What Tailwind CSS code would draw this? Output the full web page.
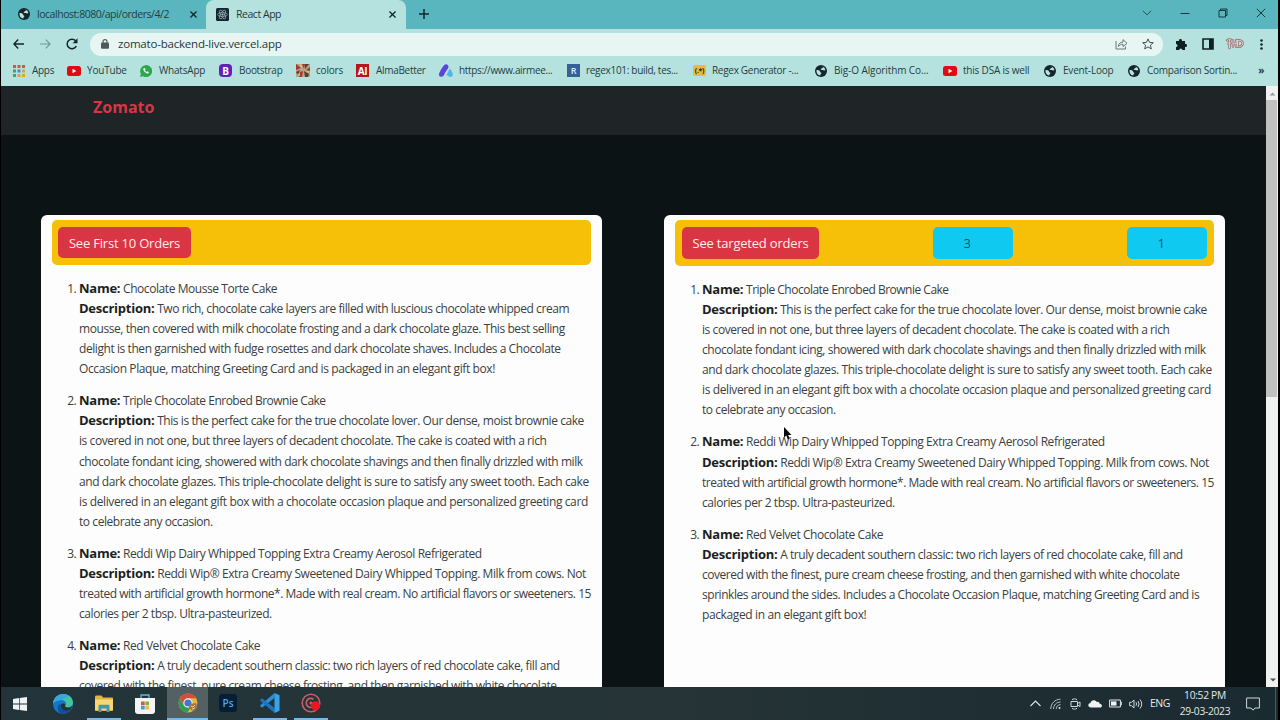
<!DOCTYPE html>
<html lang="en">
<head>
  <meta charset="UTF-8">
  <title>React App</title>
  <script src="https://cdn.jsdelivr.net/npm/@tailwindcss/browser@4"></script>
</head>
<body class="bg-black w-[1280px] h-[720px] overflow-hidden font-['Open_Sans','Noto_Sans',sans-serif]">
  <svg class="hidden">
    <symbol id="globe" viewBox="0 0 12 12">
      <circle cx="6" cy="6" r="6" fill="#14262b"/>
      <path d="M1.4 5.2C2.6 4.8 3.8 5 4.6 5.7c.8.6.2 1.5 1.2 1.7.9.2.6 1.2 0 1.6-.5.4-.3 1-.6 1.6C2.9 10.2 1.3 8.2 1.4 5.2zM5.5 1.4c.8-.2 2.3 0 3 .6-.3.9-1.3.7-1.6 1.3-.3.7-1 .5-1.3 1.1.5.6 1.6.2 2.2.7.7.5 1.7.4 2.5.2C10.3 3.5 8.4 1 5.5 1.4z" fill="#b8e3e0"/>
    </symbol>
    <symbol id="youtube" viewBox="0 0 14 10">
      <rect width="14" height="10" rx="2.5" fill="#e00b12"/>
      <path d="M5.5 2.8v4.400L9.300 5z" fill="#fff"/>
    </symbol>
  </svg>

  <div class="relative flex flex-col h-full ml-px w-[1277px]">
    <!-- Tab strip -->
    <div class="flex h-[29px] shrink-0 bg-[#5ab6be] text-[10.5px] text-[#213f44] tracking-[-0.46px]">
      <div class="flex items-center w-[205px] pl-[17px] pr-[9px] pb-px">
        <svg class="w-3 h-3 mr-[7px]"><use href="#globe"/></svg>
        <span class="flex-1 pt-px whitespace-nowrap">localhost:8080/api/orders/4/2</span>
        <svg class="w-[7px] h-[7px]" viewBox="0 0 8 8" stroke="#14262b" stroke-width="1.5"><path d="M.5.5l7 7M7.500.5l-7 7"/></svg>
      </div>
      <div class="flex items-center w-[200px] pl-2.5 pr-[10px] pb-px rounded-t-lg bg-[#b5e2df] text-[#24393b]">
        <svg class="w-[13px] h-[13px] mr-[7px]" viewBox="0 0 13 13" fill="none" stroke="#8fb4bd" stroke-width=".7">
          <rect width="13" height="13" rx="1.5" fill="#14252c" stroke="none"/>
          <ellipse cx="6.5" cy="6.5" rx="5" ry="2"/>
          <ellipse cx="6.5" cy="6.5" rx="5" ry="2" transform="rotate(60 6.5 6.5)"/>
          <ellipse cx="6.5" cy="6.5" rx="5" ry="2" transform="rotate(120 6.5 6.5)"/>
          <circle cx="6.5" cy="6.5" r=".8" fill="#8fb4bd"/>
        </svg>
        <span class="flex-1 pt-px">React App</span>
        <svg class="w-[7px] h-[7px]" viewBox="0 0 8 8" stroke="#14262b" stroke-width="1.5"><path d="M.5.5l7 7M7.500.5l-7 7"/></svg>
      </div>
      <svg class="w-[10px] h-[10px] ml-[13px] mt-[9px]" viewBox="0 0 10 10" stroke="#14262b" stroke-width="1.5"><path d="M5 0v10M0 5h10"/></svg>
      <div class="flex items-center gap-[28px] ml-auto pr-3 pb-[4px]">
        <svg class="w-[10px] h-[10px]" viewBox="0 0 10 10" fill="none" stroke="#23555b"><path d="M.8 2.800l4.200 4 4.200-4"/></svg>
        <svg class="w-[10px] h-[10px]" viewBox="0 0 10 10" stroke="#16383d"><path d="M.5 5.500h9"/></svg>
        <svg class="w-[10px] h-[10px]" viewBox="0 0 10 10" fill="none" stroke="#16383d"><path d="M1 2.500h6.500v6.500H1zM2.500 2.500V1H9v6.500H7.500"/></svg>
        <svg class="w-[10px] h-[10px]" viewBox="0 0 10 10" stroke="#16383d"><path d="M.8.8l8.400 8.400M9.200.8L.8 9.200"/></svg>
      </div>
    </div>

    <!-- Address bar -->
    <div class="flex items-center h-[29px] shrink-0 bg-[#b5e2df] pl-3 pt-px">
      <svg class="w-[11px] h-[10px]" viewBox="0 0 11 10" fill="none" stroke="#14262b" stroke-width="1.4"><path d="M11 5H1M5.200.6L.9 5l4.300 4.400"/></svg>
      <svg class="w-[11px] h-[10px] ml-4" viewBox="0 0 11 10" fill="none" stroke="#709a9b" stroke-width="1.2"><path d="M0 5h10M5.800.6L10.100 5 5.800 9.400"/></svg>
      <svg class="w-3 h-3 ml-[15px]" viewBox="0 0 12 12"><path d="M10.300 8A4.800 4.800 0 1 1 9.600 2.800" fill="none" stroke="#14262b" stroke-width="1.5"/><path d="M11.500.3v4.900H6.600z" fill="#14262b"/></svg>
      <div class="flex items-center w-[1073px] h-[23px] ml-3 rounded-full bg-[#e8f6f3] pl-[11px] pr-[9px]">
        <svg class="w-2 h-[10px]" viewBox="0 0 8 10"><rect y="3.5" width="8" height="6.3" rx="1" fill="#4b5a5c"/><path d="M2 4V2.600a2 2 0 0 1 4 0V4" fill="none" stroke="#4b5a5c" stroke-width="1.1"/></svg>
        <span class="flex-1 ml-[9px] text-[11.5px] leading-none text-[#26383a] tracking-[-0.2px]">zomato-backend-live.vercel.app</span>
        <svg class="w-[13px] h-[12px] mr-[14px]" viewBox="0 0 13 12" fill="none" stroke="#667879"><path d="M1 3v8h9.500V8.500"/><path d="M3.300 8.500c.3-3 2-4.300 4.700-4.400V1.600L12 5.300 8 8.600V6.300C6 6.300 4.500 7 3.300 8.500z"/></svg>
        <svg class="w-3 h-3" viewBox="0 0 12 12" fill="none" stroke="#405355" stroke-linejoin="round"><path d="M6 .9l1.500 3.500 3.800.3-2.900 2.500.9 3.700L6 8.900l-3.300 2 .9-3.700L.7 4.700l3.800-.3z"/></svg>
      </div>
      <svg class="w-3 h-3 ml-3" viewBox="0 0 12 12" fill="#101f22"><path d="M1 3h2.900a1.600 1.600 0 1 1 3.100 0h3v2.900a1.600 1.600 0 1 1 0 3.100v3H7.300a1.500 1.500 0 0 0-3 0H1V9a1.500 1.500 0 0 0 0-3z"/></svg>
      <svg class="w-3 h-3 ml-[15px]" viewBox="0 0 12 12"><path d="M1 1h10v10H1z" fill="none" stroke="#101f22" stroke-width="1.6"/><path d="M7 1h4v10H7z" fill="#101f22"/></svg>
      <svg class="w-[18px] h-3 ml-3 overflow-visible" viewBox="0 0 18 12" fill="none" stroke-linecap="round">
        <path d="M1 2.500c2-2 6-1 4.500 1.500C4.800 5.500 3.500 6 2.500 6M3.500 2v8M7 2.500v6M7.200 5.500l3-.3M10.300 2l-.3 6.500M11.500 2.500v6c3 1 5.500-1 5.200-3.500-.3-2-2.500-3.200-5.200-2.500z" stroke="#8e6f72" stroke-width="2.4"/>
        <path d="M1 2.500c2-2 6-1 4.500 1.500C4.800 5.500 3.500 6 2.500 6M3.500 2v8M7 2.500v6M7.200 5.500l3-.3M10.300 2l-.3 6.500M11.500 2.500v6c3 1 5.500-1 5.200-3.500-.3-2-2.500-3.200-5.200-2.500z" stroke="#f0d3d0" stroke-width=".9"/>
      </svg>
      <svg class="w-[3px] h-[11px] ml-4" viewBox="0 0 3 11" fill="#14262b"><circle cx="1.5" cy="1.5" r="1.3"/><circle cx="1.5" cy="5.5" r="1.3"/><circle cx="1.5" cy="9.5" r="1.3"/></svg>
    </div>

    <!-- Bookmarks -->
    <div class="flex items-center h-7 shrink-0 bg-[#b5e2df] pl-3 pb-[3px] text-[10px] text-[#253d40] tracking-[-0.3px] whitespace-nowrap">
      <div class="flex items-center gap-[7px] w-[54px]">
        <svg class="w-3 h-3" viewBox="0 0 12 12">
          <path d="M0 0h3v3H0zM4.500 0h3v3h-3zM9 0h3v3H9z" fill="#c9584f"/>
          <path d="M0 4.500h3v3H0zM0 9h3v3H0z" fill="#4e9c62"/>
          <path d="M4.500 4.500h3v3h-3z" fill="#4f86c9"/>
          <path d="M9 4.500h3v3H9zM4.500 9h3v3h-3zM9 9h3v3H9z" fill="#d0a649"/>
        </svg>
        <span>Apps</span>
      </div>
      <div class="flex items-center gap-[6px] w-[73px]"><svg class="w-[14px] h-[10px]"><use href="#youtube"/></svg><span class="tracking-[-0.2px]">YouTube</span></div>
      <div class="flex items-center gap-[7px] w-[79px]">
        <svg class="w-3 h-3" viewBox="0 0 12 12"><path d="M0 12l.9-3A6 6 0 1 1 3 11.200z" fill="#2aa84a"/><path d="M3.900 3c-1.200.9-.6 2.600.8 4s3.200 2 4 1l.2-1-1.500-.8-.7.700C5.900 6.600 5.300 6 5 5.200l.6-.7L5 3z" fill="#e6f7ea"/></svg>
        <span class="tracking-[-0.2px]">WhatsApp</span>
      </div>
      <div class="flex items-center gap-[7px] w-[77px]">
        <span class="flex items-center justify-center w-[13px] h-[13px] rounded-sm bg-[#6420b8] text-white font-bold text-[10px] leading-none">B</span>
        <span>Bootstrap</span>
      </div>
      <div class="flex items-center gap-[6px] w-[60px]">
        <svg class="w-[14px] h-[13px]" viewBox="0 0 14 13"><path d="M0 0h14v13H0z" fill="#b9a189"/><path d="M0 0l5 4-5 2zM6 0h3l-1 5zM10 6l4-3v4zM4 8l3-1-1 6H3z" fill="#a53a2d"/><path d="M9 0h4L9 5zM0 8l4-2-2 5zM8 7l5 3-1 3H9z" fill="#4d4635"/><path d="M3 0l3 1v4zM1 11l3-2v3zM10 7h3v2z" fill="#dfc06f"/></svg>
        <span class="tracking-[-0.2px]">colors</span>
      </div>
      <div class="flex items-center gap-[7px] w-[83px]">
        <span class="flex items-center justify-center w-[13px] h-[13px] bg-[#b3161b] text-white font-bold text-[10px] leading-none">AI</span>
        <span>AlmaBetter</span>
      </div>
      <div class="flex items-center gap-[6px] w-[128px]">
        <svg class="w-[14px] h-[13px]" viewBox="0 0 14 13"><path d="M10.800 4.500c2.200 2.800 3.200 5 3 6.500-.4 1.800-2.200 2.300-3.800 1.600L7.500 11z" fill="#4db8e8"/><path d="M5.500.8c1.500-1.400 4-.5 4 1.800 0 2.500-2.500 4-4 7.400-.6 1.800-1.700 3-3.500 2.700-2-.3-2.500-2-1.600-4C1.700 6 4 2.500 5.500.8z" fill="#5b45d8"/></svg>
        <span class="tracking-[-0.34px]">https://www.airmee...</span>
      </div>
      <div class="flex items-center gap-[6px] w-[126px]">
        <span class="flex items-center justify-center w-[13px] h-[13px] bg-[#34619a] text-[#dbe8f6] font-semibold text-[9px] leading-none">R</span>
        <span>regex101: build, tes...</span>
      </div>
      <div class="flex items-center gap-[6px] w-[122px]">
        <span class="flex items-center justify-center w-[13px] h-[11px] rounded-xs bg-[#e5bd3e] text-[#2c2614] font-bold text-[7px] leading-none">(.*)</span>
        <span>Regex Generator -...</span>
      </div>
      <div class="flex items-center gap-[7px] w-[128px]"><svg class="w-3 h-3"><use href="#globe"/></svg><span class="tracking-[-0.1px]">Big-O Algorithm Co...</span></div>
      <div class="flex items-center gap-[6px] w-[101px]"><svg class="w-[14px] h-[10px]"><use href="#youtube"/></svg><span class="tracking-[-0.2px]">this DSA is well</span></div>
      <div class="flex items-center gap-[7px] w-[84px]"><svg class="w-3 h-3"><use href="#globe"/></svg><span class="tracking-[-0.2px]">Event-Loop</span></div>
      <div class="flex items-center gap-[7px]"><svg class="w-3 h-3"><use href="#globe"/></svg><span class="tracking-[-0.24px]">Comparison Sortin...</span></div>
      <span class="ml-auto mr-[14px] font-bold">»</span>
    </div>

    <!-- Page -->
    <div class="flex flex-1 min-h-0">
      <div class="flex flex-col w-[1265px] bg-[#0c1315] overflow-hidden">
        <nav class="h-[49px] shrink-0 bg-[#1f2427] pl-[92px] pt-[9px] text-[16px] leading-6 font-bold text-[#d93545]">Zomato</nav>
        <div class="flex gap-[62px] pl-10 pt-[80px] text-[12px] leading-[20.06px] tracking-[-0.43px] text-[#3b3f41] whitespace-nowrap">
          <section class="w-[561px] h-[600px] rounded-md bg-[#fdfdfd] px-[11px] pt-[5px]">
            <div class="flex items-center h-[45px] rounded-[5px] bg-[#f7c008] px-[6px]">
              <button class="w-[133px] h-[31px] pt-px rounded-[5px] bg-[#da3543] text-[13px] tracking-[-0.2px] text-[#fdeeee]">See First 10 Orders</button>
            </div>
            <ol class="list-decimal pl-[27px] pt-[14px] space-y-3 [&_b]:text-[13px] [&_b]:tracking-[-0.25px] [&_b]:text-[#1b1f21] [&_b]:leading-none">
              <li><b>Name:</b> Chocolate Mousse Torte Cake<br>
                <b>Description:</b> Two rich, chocolate cake layers are filled with luscious chocolate whipped cream<br>
                mousse, then covered with milk chocolate frosting and a dark chocolate glaze. This best selling<br>
                delight is then garnished with fudge rosettes and dark chocolate shaves. Includes a Chocolate<br>
                <span class="tracking-[-0.4px]">Occasion Plaque, matching Greeting Card and is packaged in an elegant gift box!</span></li>
              <li><b>Name:</b> <span class="tracking-[-0.5px]">Triple Chocolate Enrobed Brownie Cake</span><br>
                <b>Description:</b> This is the perfect cake for the true chocolate lover. Our dense, moist brownie cake<br>
                is covered in not one, but three layers of decadent chocolate. The cake is coated with a rich<br>
                chocolate fondant icing, showered with dark chocolate shavings and then finally drizzled with milk<br>
                <span class="tracking-[-0.41px]">and dark chocolate glazes. This triple-chocolate delight is sure to satisfy any sweet tooth. Each cake</span><br>
                <span class="tracking-[-0.39px]">is delivered in an elegant gift box with a chocolate occasion plaque and personalized greeting card</span><br>
                to celebrate any occasion.</li>
              <li><b>Name:</b> Reddi Wip Dairy Whipped Topping Extra Creamy Aerosol Refrigerated<br>
                <b>Description:</b> Reddi Wip® Extra Creamy Sweetened Dairy Whipped Topping. Milk from cows. Not<br>
                <span class="tracking-[-0.48px]">treated with artificial growth hormone*. Made with real cream. No artificial flavors or sweeteners. 15</span><br>
                calories per 2 tbsp. Ultra-pasteurized.</li>
              <li><b>Name:</b> Red Velvet Chocolate Cake<br>
                <b>Description:</b> A truly decadent southern classic: two rich layers of red chocolate cake, fill and<br>
                <span class="tracking-[-0.46px]">covered with the finest, pure cream cheese frosting, and then garnished with white chocolate</span></li>
            </ol>
          </section>
          <section class="w-[561px] h-[600px] rounded-md bg-[#fdfdfd] px-[11px] pt-[5px]">
            <div class="flex items-center justify-between h-[46px] rounded-[5px] bg-[#f7c008] px-[7px]">
              <button class="w-[137px] h-[32px] pt-px rounded-[5px] bg-[#da3543] text-[13px] tracking-[-0.2px] text-[#fdeeee]">See targeted orders</button>
              <span class="w-[80px] h-[32px] rounded-[5px] bg-[#0fc9f0] pr-3 text-center text-[12.5px] leading-[34px] text-[#17505f]">3</span>
              <span class="w-[80px] h-[32px] rounded-[5px] bg-[#0fc9f0] pr-3 text-center text-[12.5px] leading-[34px] text-[#17505f]">1</span>
            </div>
            <ol class="list-decimal pl-[27px] pt-[14px] space-y-3 [&_b]:text-[13px] [&_b]:tracking-[-0.25px] [&_b]:text-[#1b1f21] [&_b]:leading-none">
              <li><b>Name:</b> <span class="tracking-[-0.5px]">Triple Chocolate Enrobed Brownie Cake</span><br>
                <b>Description:</b> This is the perfect cake for the true chocolate lover. Our dense, moist brownie cake<br>
                is covered in not one, but three layers of decadent chocolate. The cake is coated with a rich<br>
                chocolate fondant icing, showered with dark chocolate shavings and then finally drizzled with milk<br>
                <span class="tracking-[-0.41px]">and dark chocolate glazes. This triple-chocolate delight is sure to satisfy any sweet tooth. Each cake</span><br>
                <span class="tracking-[-0.39px]">is delivered in an elegant gift box with a chocolate occasion plaque and personalized greeting card</span><br>
                to celebrate any occasion.</li>
              <li><b>Name:</b> Reddi Wip Dairy Whipped Topping Extra Creamy Aerosol Refrigerated<br>
                <b>Description:</b> Reddi Wip® Extra Creamy Sweetened Dairy Whipped Topping. Milk from cows. Not<br>
                <span class="tracking-[-0.48px]">treated with artificial growth hormone*. Made with real cream. No artificial flavors or sweeteners. 15</span><br>
                calories per 2 tbsp. Ultra-pasteurized.</li>
              <li><b>Name:</b> Red Velvet Chocolate Cake<br>
                <b>Description:</b> A truly decadent southern classic: two rich layers of red chocolate cake, fill and<br>
                <span class="tracking-[-0.46px]">covered with the finest, pure cream cheese frosting, and then garnished with white chocolate</span><br>
                <span class="tracking-[-0.45px]">sprinkles around the sides. Includes a Chocolate Occasion Plaque, matching Greeting Card and is</span><br>
                <span class="tracking-[-0.38px]">packaged in an elegant gift box!</span></li>
            </ol>
          </section>
        </div>
      </div>
      <!-- Scrollbar -->
      <div class="flex flex-col w-3 bg-[#f1f1f1]">
        <svg class="w-3 h-[14px]" viewBox="0 0 12 14"><path d="M3.500 9.500L6.500 6.500l3 3z" fill="#9a9a9a"/></svg>
        <div class="h-[297px] mr-px bg-[#c1c1c1]"></div>
        <svg class="w-3 h-[14px] mt-auto" viewBox="0 0 12 14"><path d="M4 5.500h6l-3 3z" fill="#505050"/></svg>
      </div>
    </div>

    <!-- Taskbar -->
    <div class="flex h-[33px] shrink-0 bg-linear-to-r from-[#22343a] via-[#263436] to-[#1a2a31] text-[#e3e9ea]">
      <div class="flex items-center justify-center w-[38px]">
        <svg class="w-[14px] h-[14px]" viewBox="0 0 14 14" fill="#eef3f3"><path d="M0 2l6-.9v5.500H0zM6.700 1L14 0v6.600H6.700zM0 7.400h6v5.500L0 12zM6.700 7.400H14V14l-7.300-1z"/></svg>
      </div>
      <div class="flex items-center justify-center w-[46px] pl-px">
        <svg class="w-5 h-5" viewBox="0 0 20 20">
          <circle cx="10" cy="10" r="10" fill="#1477c9"/>
          <path d="M0 9.500C.8 3.500 5 0 10.200 0 16 0 20 4 20 8.500c0 3.200-2.500 5-5.200 5-2 0-3.300-.8-2.500-2C14 9 12 6 8.500 6 5 6 1.500 7 0 9.500z" fill="#43c6a0"/>
          <path d="M0 9.500C.8 3.500 5 0 10.200 0c2.300 0 4.500.8 6 2L8.500 6C5 6 1.500 7 0 9.500z" fill="#36a8dd"/>
          <path d="M7.500 9c-2 3 .5 7.500 5 7.800 2 .1 4-.4 5.500-1.500-2 3.500-6 5.200-9.500 4.500C3.500 18 4 11 7.500 9z" fill="#0f4f9b"/>
          <path d="M12.300 11.500c-.8 1.200.5 2 2.500 2 1.800 0 3.600-.8 4.600-2.300L18 15.300c-1.500 1.100-3.500 1.600-5.500 1.500-3-.3-5-3-5-5.800 1-1.500 3-2 4.500-1z" fill="#22343a"/>
        </svg>
      </div>
      <div class="flex flex-col items-center w-[38px]">
        <svg class="w-5 h-[31px]" viewBox="0 0 20 31">
          <path d="M1 10c0-1 .5-1.500 1.500-1.500h5L9 10.500h9c.8 0 1 .5 1 1V23c0 .6-.4 1-1 1H2c-.6 0-1-.4-1-1z" fill="#e4b43c"/>
          <path d="M1 12.500h18V23H1z" fill="#f8d775"/>
          <path d="M4.500 25v-6c0-.8.500-1.200 1.200-1.200h8.600c.7 0 1.200.4 1.200 1.200v6h-3v-3.500h-5V25z" fill="#4b93bd"/>
        </svg>
        <div class="w-[34px] h-[2px] bg-[#76b9e6]"></div>
      </div>
      <div class="flex items-center justify-center w-[44px]">
        <svg class="w-5 h-5" viewBox="0 0 20 20"><path d="M6 4V1h8v3" fill="none" stroke="#67b7dd" stroke-width="1.3"/><path d="M0 4h20v13a3 3 0 0 1-3 3H3a3 3 0 0 1-3-3z" fill="#f3f5f5"/><path d="M6 7.500h3.700v3.700H6z" fill="#d9573a"/><path d="M10.300 7.500H14v3.700h-3.700z" fill="#86b13c"/><path d="M6 11.800h3.700v3.700H6z" fill="#3c9fd6"/><path d="M10.300 11.800H14v3.700h-3.700z" fill="#efba3a"/></svg>
      </div>
      <div class="flex flex-col items-center w-[41px] bg-[#536164]">
        <svg class="w-5 h-[31px]" viewBox="0 -6 20 31">
          <circle cx="10" cy="10" r="9.5" fill="#e4b83a"/>
          <path d="M1.800 5.200A9.500 9.500 0 0 1 18.200 5.200H10L5.800 12z" fill="#d84a3b"/>
          <path d="M1.800 5.200A9.500 9.500 0 0 0 9.500 19.500l4.300-7-7.900.3z" fill="#2f9e54"/>
          <circle cx="10" cy="10" r="4.7" fill="#f1f3f4"/><circle cx="10" cy="10" r="3.6" fill="#3e78d3"/>
          <path d="M11 14c0-2 2-4 4-3.500l3-.5c1 1 1 3 .5 5L16 18l-3-1z" fill="#a9713d"/><path d="M13 13l2 1 2-2M14 16l3-1" stroke="#ead0a3" fill="none"/>
        </svg>
        <div class="w-full h-[2px] bg-[#76b9e6]"></div>
      </div>
      <div class="flex items-center justify-center w-[40px]">
        <span class="flex items-center justify-center w-[18px] h-[18px] mb-px rounded-[3px] bg-[#051e36] text-[#4ea9ee] text-[10px] font-semibold leading-none">Ps</span>
      </div>
      <div class="flex flex-col items-center w-[43px]">
        <svg class="w-5 h-[31px]" viewBox="0 -6 20 31">
          <path d="M14.500 5L2 14.700.3 13.300v-1L14.500 0z" fill="#2a8fd8"/>
          <path d="M14.500 15L2 5.300.3 6.700v1L14.500 20z" fill="#1c74bd"/>
          <path d="M14.500 0L19.500 2.300v15.400L14.500 20z" fill="#37a3ee"/>
        </svg>
        <div class="w-[34px] h-[2px] bg-[#76b9e6]"></div>
      </div>
      <div class="flex flex-col items-center w-[40px]">
        <svg class="w-5 h-[31px]" viewBox="0 -6 20 31">
          <circle cx="10" cy="10" r="8.8" fill="none" stroke="#c76066" stroke-width="1.6"/>
          <path d="M12.500 6.300a4.500 4.500 0 1 0 1.500 5" fill="none" stroke="#c76066" stroke-width="1.7"/>
          <circle cx="10" cy="10" r="1.6" fill="#c76066"/>
          <circle cx="14.5" cy="12.8" r="4.6" fill="#f01420"/>
        </svg>
        <div class="w-[34px] h-[2px] bg-[#76b9e6]"></div>
      </div>

      <div class="flex items-center ml-auto">
        <svg class="w-[11px] h-[7px]" viewBox="0 0 11 7" fill="none" stroke="#dde5e6" stroke-width="1.1"><path d="M.5 6l5-5 5 5"/></svg>
        <svg class="w-[11px] h-[12px] ml-[9px]" viewBox="0 0 11 12" fill="none" stroke="#b8c3c5"><path d="M.8 11C.8 5.500 5 1.200 10.500 1.200M3.500 11c0-4 3-7 7-7M6.200 11c0-2.500 1.800-4.300 4.300-4.300"/><circle cx="9.5" cy="10" r="1" fill="#dde5e6" stroke="none"/></svg>
        <svg class="w-[11px] h-[12px] ml-[9px]" viewBox="0 0 11 12" fill="none" stroke="#cfd8da"><path d="M1 3.500h6.500v5H1zM7.500 5.500L10 4v4.500L7.500 7M2 1.700C3.500.6 5.500.6 7 1.700M2 10.300c1.500 1.100 3.500 1.100 5 0"/></svg>
        <svg class="w-[14px] h-[9px] ml-[7px]" viewBox="0 0 14 9" fill="#eef2f2"><path d="M3 8.500C-.5 8.500-.5 4.500 2.500 4 3 1 7 .2 8.500 2.800c2-.4 3 .7 3.200 2 3 .2 2.800 3.700.2 3.700z"/></svg>
        <svg class="w-[13px] h-[9px] ml-[7px]" viewBox="0 0 13 9"><path d="M.6 1h10.800v7H.6zM11.500 3.200h1.200v2.600h-1.200" fill="none" stroke="#dde5e6"/><path d="M2 2.400h5.500v4.200H2z" fill="#eef2f2"/></svg>
        <svg class="w-[14px] h-[12px] ml-[7px]" viewBox="0 0 14 12" fill="none" stroke="#cfd8da"><path d="M.6 4.300h2L5 2v8L2.600 7.700h-2zM7 4.300q1.200 1.700 0 3.400M9 3q2.200 3 0 6M11 1.500q3.500 4.500 0 9"/></svg>
        <span class="ml-[7px] text-[10.5px] tracking-[-0.45px]">ENG</span>
        <div class="w-[52px] ml-[9px] text-center text-[10.25px] leading-[15.5px] tracking-[-0.3px] whitespace-nowrap">10:52 PM<br>29-03-2023</div>
        <svg class="w-[14px] h-[14px] ml-[15px] mr-[15px]" viewBox="0 0 14 14" fill="none" stroke="#cfd8da"><path d="M.6 1h12.800v10H9L7 13.200 5 11H.6z"/></svg>
        <div class="w-px h-full mr-[2px] bg-[#4b585c]"></div>
      </div>
    </div>

    <!-- Mouse pointer -->
    <svg class="absolute left-[783px] top-[427px] w-[8px] h-[13px]" viewBox="0 0 8 13"><path d="M0 0v10.500l2.300-2 1.600 3.900 1.900-.8-1.700-3.700H7.500z" fill="#0a0a0a"/></svg>
  </div>
</body>
</html>
